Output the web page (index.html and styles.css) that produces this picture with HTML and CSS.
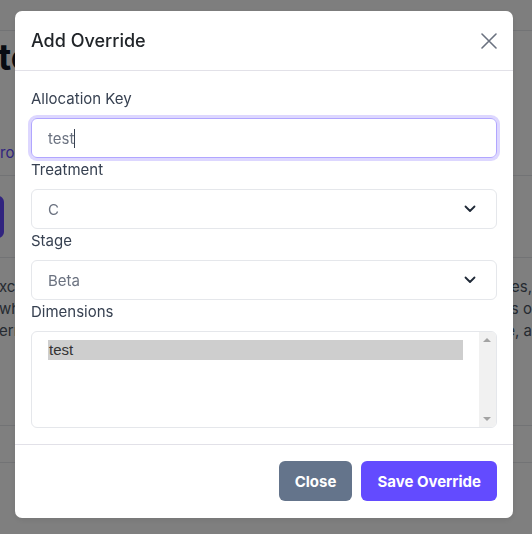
FILE: index.html
```html
<!DOCTYPE html>
<html>
<head>
<meta charset="utf-8">
<link rel="stylesheet" href="styles.css">
</head>
<body>
<div class="page">
  <div class="topbar"></div>
  <h1 class="page-title">te</h1>
  <a class="page-link">ro</a>
  <div class="rule"></div>
  <div class="action-row"><button class="page-btn" aria-label="New"></button></div>
  <div class="rule"></div>
  <div class="para">
    <div class="para-line"><span>xc</span><span>es,</span></div>
    <div class="para-line"><span>whe</span><span>s o</span></div>
    <div class="para-line"><span>err</span><span>e, a</span></div>
  </div>
  <div class="rule rule-low"></div>
  <div class="rule rule-last"></div>
</div>

<div class="backdrop"></div>

<div class="modal">
  <div class="modal-header">
    <h2 class="modal-title">Add Override</h2>
    <button class="close-x" aria-label="Close">
      <svg width="16" height="16" viewBox="0 0 16 16"><path d="M1 1 L15 15 M15 1 L1 15" stroke="#6b7280" stroke-width="1.6" fill="none" stroke-linecap="round"/></svg>
    </button>
  </div>
  <div class="modal-body">
    <label class="field-label">Allocation Key</label>
    <div class="control control-focus"><span class="value">test</span><span class="caret"></span></div>
    <label class="field-label">Treatment</label>
    <div class="control">
      <span class="value">C</span>
      <svg class="chev" width="12" height="8" viewBox="0 0 12 8"><path d="M1.5 1.5 L6 6 L10.5 1.5" stroke="#1f2937" stroke-width="1.8" fill="none" stroke-linecap="round" stroke-linejoin="round"/></svg>
    </div>
    <label class="field-label">Stage</label>
    <div class="control">
      <span class="value">Beta</span>
      <svg class="chev" width="12" height="8" viewBox="0 0 12 8"><path d="M1.5 1.5 L6 6 L10.5 1.5" stroke="#1f2937" stroke-width="1.8" fill="none" stroke-linecap="round" stroke-linejoin="round"/></svg>
    </div>
    <label class="field-label">Dimensions</label>
    <div class="listbox">
      <div class="list-content">
        <div class="option selected">test</div>
      </div>
      <div class="scrolltrack">
        <span class="arrow-up"></span>
        <span class="arrow-down"></span>
      </div>
    </div>
  </div>
  <div class="modal-footer">
    <button class="btn btn-secondary">Close</button>
    <button class="btn btn-primary">Save Override</button>
  </div>
</div>
</body>
</html>
```
FILE: styles.css
```css
html, body {
  margin: 0;
  padding: 0;
}
body {
  font-family: Inter, "Noto Sans", sans-serif;
  background: #ffffff;
  width: 532px;
  height: 534px;
  overflow: hidden;
}

/* underlying page */
.page {
  display: flex;
  flex-direction: column;
  width: 532px;
}
.topbar {
  height: 30px;
  border-bottom: 1px solid #e5e7eb;
  background: #fdfdfd;
}
.page-title {
  margin: 6px 0 0 -2px;
  font-size: 36px;
  line-height: 40px;
  font-weight: 700;
  color: #111827;
  white-space: nowrap;
}
.page-link {
  margin-top: 66px;
  font-size: 15px;
  line-height: 20px;
  color: #6349ff;
  margin-left: 0;
  white-space: nowrap;
}
.rule {
  height: 1px;
  background: #e5e7eb;
}
.page-link + .rule { margin-top: 12px; }
.action-row {
  height: 81px;
  display: flex;
  align-items: center;
}
.page-btn {
  margin-left: -80px;
  width: 84px;
  height: 42px;
  border: 0;
  border-radius: 6px;
  background: #6349ff;
}
.para {
  padding-top: 18px;
  display: flex;
  flex-direction: column;
}
.para-line {
  display: flex;
  justify-content: space-between;
  font-size: 15px;
  line-height: 22px;
  color: #4b5563;
  white-space: nowrap;
}
.para-line span:first-child { margin-left: -1px; }
.rule-low { margin-top: 83px; }
.rule-last { margin-top: 36px; }

/* backdrop & modal */
.backdrop {
  position: fixed;
  inset: 0;
  background: rgba(0, 0, 0, 0.5);
}
.modal {
  position: fixed;
  left: 15px;
  top: 11px;
  width: 498px;
  background: #ffffff;
  border-radius: 7px;
  display: flex;
  flex-direction: column;
  box-shadow: 0 2px 6px rgba(0,0,0,0.08);
}
.modal-header {
  height: 59px;
  padding: 0 16px;
  display: flex;
  align-items: center;
  justify-content: space-between;
  border-bottom: 1px solid #e2e1e8;
}
.modal-title {
  margin: 0;
  font-size: 18px;
  font-weight: 500;
  color: #212529;
}
.close-x {
  border: 0;
  background: none;
  padding: 0;
  width: 16px;
  height: 16px;
  display: flex;
}
.modal-body {
  padding: 16px;
  display: flex;
  flex-direction: column;
}
.field-label {
  font-size: 15px;
  line-height: 23px;
  color: #374151;
  margin-bottom: 8px;
}
.control {
  height: 40px;
  box-sizing: border-box;
  border: 1px solid #e5e7eb;
  border-radius: 6px;
  padding: 0 20px 0 16px;
  display: flex;
  align-items: center;
  font-size: 15px;
  color: #6b7280;
}
.control-focus {
  border-color: #b1a6ff;
  box-shadow: 0 0 0 3px rgba(99, 73, 255, 0.22);
}
.value { flex: 1 0 auto; }
.control-focus .value { flex: 0 0 auto; }
.caret {
  width: 1px;
  height: 19px;
  background: #374151;
}
.chev { flex: 0 0 auto; }

.listbox {
  height: 97px;
  box-sizing: border-box;
  border: 1px solid #e5e7eb;
  border-radius: 6px;
  display: flex;
  overflow: hidden;
}
.list-content {
  flex: 1;
  padding: 8px 16px;
}
.option {
  font-family: "Liberation Sans", Arial, sans-serif;
  font-size: 15px;
  line-height: 20px;
  color: #333333;
  padding-left: 1px;
}
.option.selected { background: #cecece; }
.scrolltrack {
  width: 17px;
  background: #f1f1f1;
  position: relative;
}
.arrow-up, .arrow-down {
  position: absolute;
  left: 4px;
  width: 0;
  height: 0;
  border-left: 4px solid transparent;
  border-right: 4px solid transparent;
}
.arrow-up { top: 6px; border-bottom: 4px solid #a3a3a3; }
.arrow-down { bottom: 6px; border-top: 4px solid #a3a3a3; }

.modal-footer {
  border-top: 1px solid #e2e1e8;
  padding: 16px 16px 17px;
  display: flex;
  justify-content: flex-end;
  gap: 9px;
}
.btn {
  height: 40px;
  border: 0;
  border-radius: 6px;
  font-family: Inter, "Noto Sans", sans-serif;
  font-size: 15px;
  font-weight: 700;
  color: #ffffff;
  padding: 0 16px;
}
.btn-secondary { background: #64748b; }
.btn-primary { background: #634bff; }
```
